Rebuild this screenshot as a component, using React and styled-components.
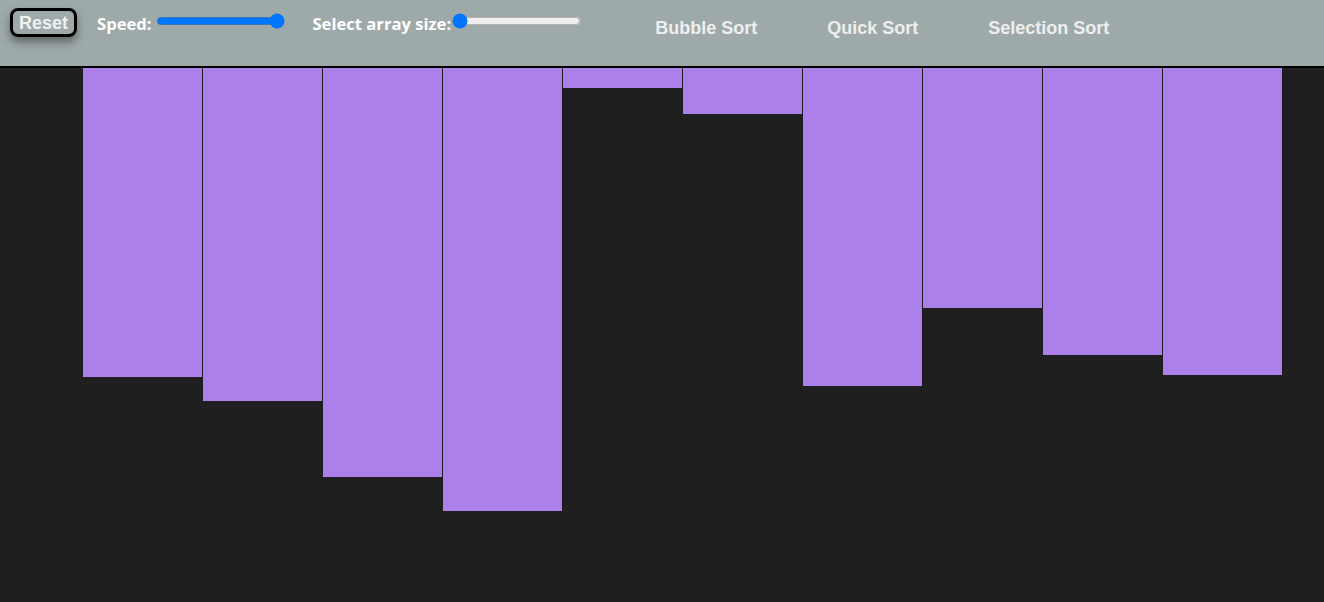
import React from "react";
import styled, { createGlobalStyle } from "styled-components";

const Global = createGlobalStyle`
  html, body { margin: 0; padding: 0; background: #1f1f20; }
  body { font-family: "Liberation Sans", Arial, sans-serif; }
`;

const Page = styled.div`
  width: 1324px;
  height: 602px;
  background: #1f1f20;
  overflow: hidden;
`;

const Header = styled.header`
  background: #9eaaa9;
  border-bottom: 2px solid #000;
  display: flex;
  align-items: flex-start;
  padding: 8px 0 0 10px;
  box-sizing: content-box;
  height: 58px;
`;

const ResetButton = styled.button`
  height: 29px;
  width: 67px;
  box-sizing: border-box;
  border: 3px solid #000;
  border-radius: 8px;
  background: transparent;
  color: #f0f0f0;
  font-family: "Liberation Sans", Arial, sans-serif;
  font-weight: bold;
  font-size: 18px;
  padding: 0;
  line-height: 20px;
  box-shadow: 0 5px 9px rgba(0, 0, 0, 0.4);
  cursor: pointer;
`;

const Control = styled.label`
  display: flex;
  align-items: center;
  margin-left: ${(p) => p.$gap}px;
  height: 30px;
  color: #fff;
  font-family: "Open Sans", "Noto Sans", sans-serif;
  font-weight: 700;
  font-size: 16.6px;
`;

const Range = styled.input`
  margin: 0 0 0 ${(p) => p.$ml}px;
  width: 129px;
  position: relative;
  top: -2px;
`;

const SortGroup = styled.nav`
  display: flex;
  margin-left: 74px;
  padding-top: 10px;
`;

const SortButton = styled.button`
  background: transparent;
  border: none;
  padding: 0;
  margin-right: ${(p) => p.$mr}px;
  color: #eeeeee;
  font-family: "Liberation Sans", Arial, sans-serif;
  font-weight: bold;
  font-size: 18px;
  line-height: 21px;
  cursor: pointer;
`;

const Bars = styled.div`
  display: flex;
  align-items: flex-start;
  padding-left: 83px;
`;

const Bar = styled.div`
  width: 120px;
  box-sizing: border-box;
  background: #ac80ea;
  border-right: 1px solid #1a1a1a;
`;

const heights = [309, 333, 409, 443, 20, 46, 318, 240, 287, 307];

export default function App() {
  return (
    <Page>
      <Global />
      <Header>
        <ResetButton>Reset</ResetButton>
        <Control $gap={20}>
          Speed:
          <Range $ml={5} type="range" min="1" max="100" defaultValue="100" />
        </Control>
        <Control $gap={27}>
          Select array size:
          <Range $ml={1} type="range" min="10" max="100" defaultValue="10" />
        </Control>
        <SortGroup>
          <SortButton $mr={70}>Bubble Sort</SortButton>
          <SortButton $mr={70}>Quick Sort</SortButton>
          <SortButton $mr={0}>Selection Sort</SortButton>
        </SortGroup>
      </Header>
      <Bars>
        {heights.map((h, i) => (
          <Bar key={i} style={{ height: h }} />
        ))}
      </Bars>
    </Page>
  );
}
